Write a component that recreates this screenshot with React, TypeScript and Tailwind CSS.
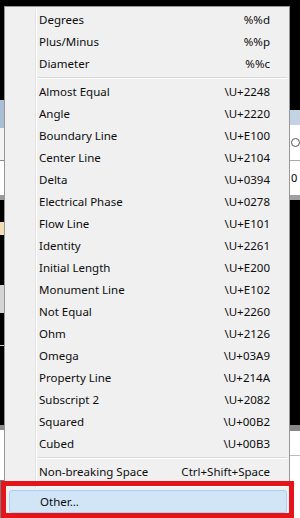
import React from 'react';

type Item = { label: string; shortcut?: string; highlighted?: boolean } | 'sep';

const items: Item[] = [
  { label: 'Degrees', shortcut: '%%d' },
  { label: 'Plus/Minus', shortcut: '%%p' },
  { label: 'Diameter', shortcut: '%%c' },
  'sep',
  { label: 'Almost Equal', shortcut: '\\U+2248' },
  { label: 'Angle', shortcut: '\\U+2220' },
  { label: 'Boundary Line', shortcut: '\\U+E100' },
  { label: 'Center Line', shortcut: '\\U+2104' },
  { label: 'Delta', shortcut: '\\U+0394' },
  { label: 'Electrical Phase', shortcut: '\\U+0278' },
  { label: 'Flow Line', shortcut: '\\U+E101' },
  { label: 'Identity', shortcut: '\\U+2261' },
  { label: 'Initial Length', shortcut: '\\U+E200' },
  { label: 'Monument Line', shortcut: '\\U+E102' },
  { label: 'Not Equal', shortcut: '\\U+2260' },
  { label: 'Ohm', shortcut: '\\U+2126' },
  { label: 'Omega', shortcut: '\\U+03A9' },
  { label: 'Property Line', shortcut: '\\U+214A' },
  { label: 'Subscript 2', shortcut: '\\U+2082' },
  { label: 'Squared', shortcut: '\\U+00B2' },
  { label: 'Cubed', shortcut: '\\U+00B3' },
  'sep',
  { label: 'Non-breaking Space', shortcut: 'Ctrl+Shift+Space' },
  'sep',
  { label: 'Other...', highlighted: true },
];

// bits of the drawing window peeking out on either side of the menu
const LeftStrip = () => (
  <div className="w-[4px] flex flex-col shrink-0">
    <div className="h-[100px] bg-black" />
    <div className="h-[28px] bg-[#a9bfd6]" />
    <div className="h-[32px] bg-[#f3f3f3]" />
    <div className="h-[1px] bg-[#8a8a8a]" />
    <div className="h-[34px] bg-white" />
    <div className="h-[5px] bg-[#9a9a9a]" />
    <div className="h-[22px] bg-black" />
    <div className="h-[13px] bg-[#f3dcb6]" />
    <div className="h-[50px] bg-black" />
    <div className="h-[28px] bg-[#d4d4d4]" />
    <div className="h-[32px] bg-black" />
    <div className="h-[1px] bg-[#cfcfcf]" />
    <div className="h-[79px] bg-black" />
    <div className="h-[5px] bg-[#8c8c8c]" />
    <div className="h-[50px] bg-white" />
    <div className="flex-1 bg-[#7a7a7a]" />
  </div>
);

const RightStrip = () => (
  <div className="flex-1 flex flex-col">
    <div className="h-[110px] bg-black" />
    <div className="h-[15px] bg-[#c4d3e3]" />
    <div className="h-[35px] bg-white flex items-center pl-[1px]">
      <div className="w-[9px] h-[9px] rounded-full border border-[#555]" />
    </div>
    <div className="h-[1px] bg-[#a8a8a8]" />
    <div className="h-[34px] bg-white flex items-center pl-[1px] text-[11px] text-black font-['Noto_Sans',sans-serif]">0</div>
    <div className="h-[5px] bg-[#a0a0a0]" />
    <div className="h-[225px] bg-black" />
    <div className="h-[6px] bg-[#888]" />
    <div className="h-[24px] bg-white" />
    <div className="h-[1px] bg-[#bbb]" />
    <div className="flex-1 bg-white" />
  </div>
);

const MenuRow = ({ item }: { item: Item }) => {
  if (item === 'sep') {
    return (
      <div className="flex h-[6px]">
        <div className="w-[29px] border-r border-[#e2e3e3] shrink-0" />
        <div className="flex-1 border-l border-white flex flex-col justify-center pl-[1px]">
          <div className="h-[1px] bg-[#d7d7d7]" />
          <div className="h-[1px] bg-white" />
        </div>
      </div>
    );
  }
  if (item.highlighted) {
    return (
      <div className="flex h-[23px] mt-[1px] items-center rounded-[3px] border border-[#a8d0f2] bg-[#d1e5f7] ml-[2px]">
        <div className="w-[29px] shrink-0" />
        <div className="pl-[1px]">{item.label}</div>
      </div>
    );
  }
  return (
    <div className="flex h-[22px]">
      <div className="w-[29px] border-r border-[#e2e3e3] shrink-0" />
      <div className="flex-1 border-l border-white flex items-center justify-between pl-[2px] pr-[17px]">
        <span>{item.label}</span>
        <span>{item.shortcut}</span>
      </div>
    </div>
  );
};

export default function App() {
  return (
    <div className="relative w-[300px] h-[518px] bg-black flex overflow-hidden">
      <LeftStrip />
      <div className="w-[286px] shrink-0 mt-[6px] h-[540px] border border-[#979797] bg-[#f0f0f0] p-[2px] text-[11.5px] text-[#0d0d0d] font-['Noto_Sans',sans-serif] leading-none">
        {items.map((item, i) => (
          <MenuRow key={i} item={item} />
        ))}
      </div>
      <RightStrip />
      {/* annotation box drawn over the screenshot */}
      <div className="absolute left-[1px] top-[481px] w-[293px] h-[37px] border-[5px] border-[#e5141b]" />
    </div>
  );
}
